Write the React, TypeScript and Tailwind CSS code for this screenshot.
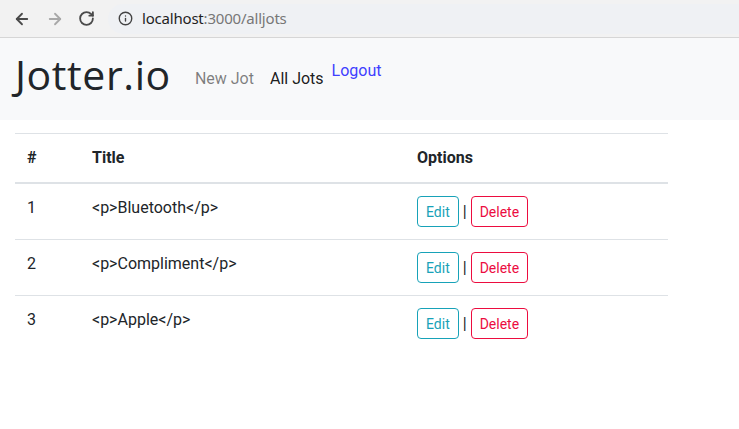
import React from 'react'
import { ArrowLeft, ArrowRight, RotateCw, Info } from 'lucide-react'

const jots = [
  { id: 1, title: '<p>Bluetooth</p>' },
  { id: 2, title: '<p>Compliment</p>' },
  { id: 3, title: '<p>Apple</p>' },
]

function BrowserBar() {
  return (
    <div className="h-[38px] bg-[#f2f2f2] border-b border-[#d6d6d6] flex items-center">
      <ArrowLeft className="ml-[13px] w-[18px] h-[18px] text-[#4a4a4a]" strokeWidth={2.4} />
      <ArrowRight className="ml-[15px] w-[18px] h-[18px] text-[#a8a8a8]" strokeWidth={2.4} />
      <RotateCw className="ml-[14px] w-[17px] h-[17px] text-[#4a4a4a]" strokeWidth={2.6} />
      <div className="ml-[13px] h-[30px] flex-1 bg-[#eff1f4] rounded-l-full flex items-center">
        <Info className="ml-[10px] w-[15px] h-[15px] text-[#444]" strokeWidth={2.2} />
        <span className="ml-[9px] text-[15px] font-['Noto_Sans',sans-serif] tracking-[-0.2px]">
          <span className="text-[#1f1f1f]">localhost</span>
          <span className="text-[#777]">:3000/alljots</span>
        </span>
      </div>
    </div>
  )
}

function Navbar() {
  return (
    <div className="bg-[#f8f9fa] flex items-start pt-[12px] pb-[21px] pl-[15px]">
      <h1 className="text-[41px] leading-[48px] font-medium tracking-[0.6px] text-[#212529] font-['Open_Sans',sans-serif]">Jotter.io</h1>
      <div className="ml-[16px] mt-[9px] flex items-start text-[16px] leading-[24px] font-['Roboto',sans-serif]">
        <a href="#" className="px-2 py-2 text-[rgba(0,0,0,0.5)]">New Jot</a>
        <a href="#" className="px-2 py-2 text-[rgba(0,0,0,0.9)]">All Jots</a>
        <a href="#" className="text-[#3f3fff]">Logout</a>
      </div>
    </div>
  )
}

function AllJots() {
  return (
    <div className="px-[15px] pt-[13px]">
      <table className="w-[653px] text-[16px] leading-[24px] text-[#212529] font-['Roboto',sans-serif] border-collapse">
        <thead>
          <tr className="border-t border-[#dee2e6] border-b-2">
            <th className="w-[65px] p-3 text-left font-bold">#</th>
            <th className="w-[325px] p-3 text-left font-bold">Title</th>
            <th className="p-3 text-left font-bold">Options</th>
          </tr>
        </thead>
        <tbody>
          {jots.map((jot) => (
            <tr key={jot.id} className="border-b border-[#dee2e6] last:border-b-0">
              <td className="p-3 align-top">{jot.id}</td>
              <td className="p-3 align-top">{jot.title}</td>
              <td className="p-3 align-top">
                <div className="flex items-center">
                  <button className="px-2 h-[31px] text-[14px] border border-[#17a2b8] text-[#17a2b8] rounded-[4px]">Edit</button>
                  <span className="mx-[4px]">|</span>
                  <button className="px-2 h-[31px] text-[14px] border border-[#ec0c3f] text-[#ec0c3f] rounded-[4px]">Delete</button>
                </div>
              </td>
            </tr>
          ))}
        </tbody>
      </table>
    </div>
  )
}

export default function App() {
  return (
    <div className="w-[739px] h-[429px] bg-white overflow-hidden">
      <BrowserBar />
      <Navbar />
      <AllJots />
    </div>
  )
}
